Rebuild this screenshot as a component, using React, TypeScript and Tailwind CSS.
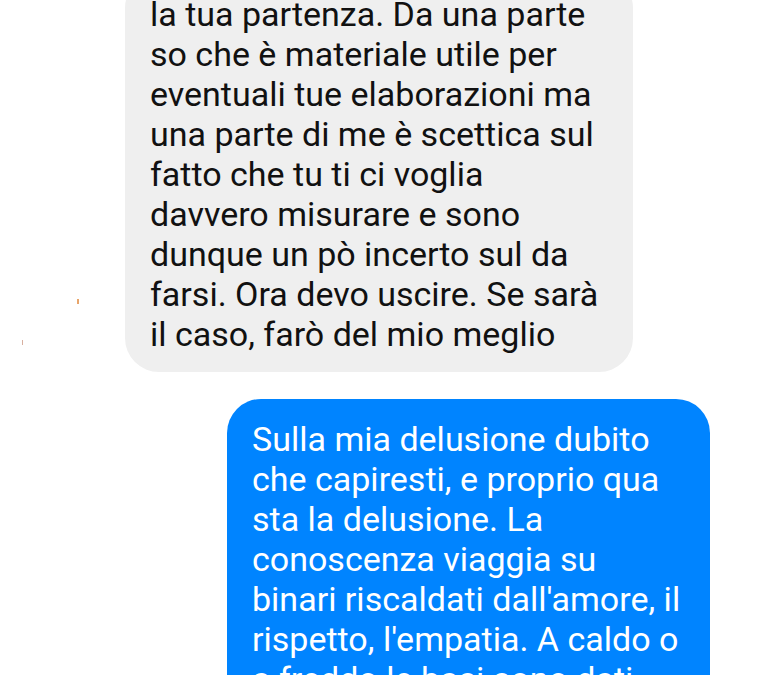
import React from "react";

const received = [
  "la tua partenza. Da una parte",
  "so che è materiale utile per",
  "eventuali tue elaborazioni ma",
  "una parte di me è scettica sul",
  "fatto che tu ti ci voglia",
  "davvero misurare e sono",
  "dunque un pò incerto sul da",
  "farsi. Ora devo uscire. Se sarà",
  "il caso, farò del mio meglio",
];

const sent = [
  "Sulla mia delusione dubito",
  "che capiresti, e proprio qua",
  "sta la delusione. La",
  "conoscenza viaggia su",
  "binari riscaldati dall'amore, il",
  "rispetto, l'empatia. A caldo o",
  "a freddo le basi sono dati",
];

function Bubble({ lines, className = "" }: { lines: string[]; className?: string }) {
  return (
    <div className={`rounded-[34px] pl-[25px] pr-3 ${className}`}>
      {lines.map((l, i) => (
        <div key={i} className="whitespace-nowrap">
          {l}
        </div>
      ))}
    </div>
  );
}

export default function App() {
  return (
    <div
      className="relative h-[675px] w-[760px] overflow-hidden bg-white text-[34px] leading-[40px]"
      style={{ fontFamily: "Roboto, 'Noto Sans', sans-serif" }}
    >
      <span className="absolute left-[77px] top-[299px] h-[5px] w-[2px] bg-[#e8a56a]" />
      <span className="absolute left-[22px] top-[340px] h-[5px] w-[1px] bg-[#d8b0a0]" />
      <Bubble
        lines={received}
        className="-mt-[26px] ml-[125px] w-[508px] bg-[#efefef] pb-[18px] pt-[20px] text-[#111111]"
      />
      <Bubble
        lines={sent}
        className="ml-[227px] mt-[27px] w-[483px] bg-[#0084ff] pb-[20px] pt-[20px] text-white"
      />
    </div>
  );
}
